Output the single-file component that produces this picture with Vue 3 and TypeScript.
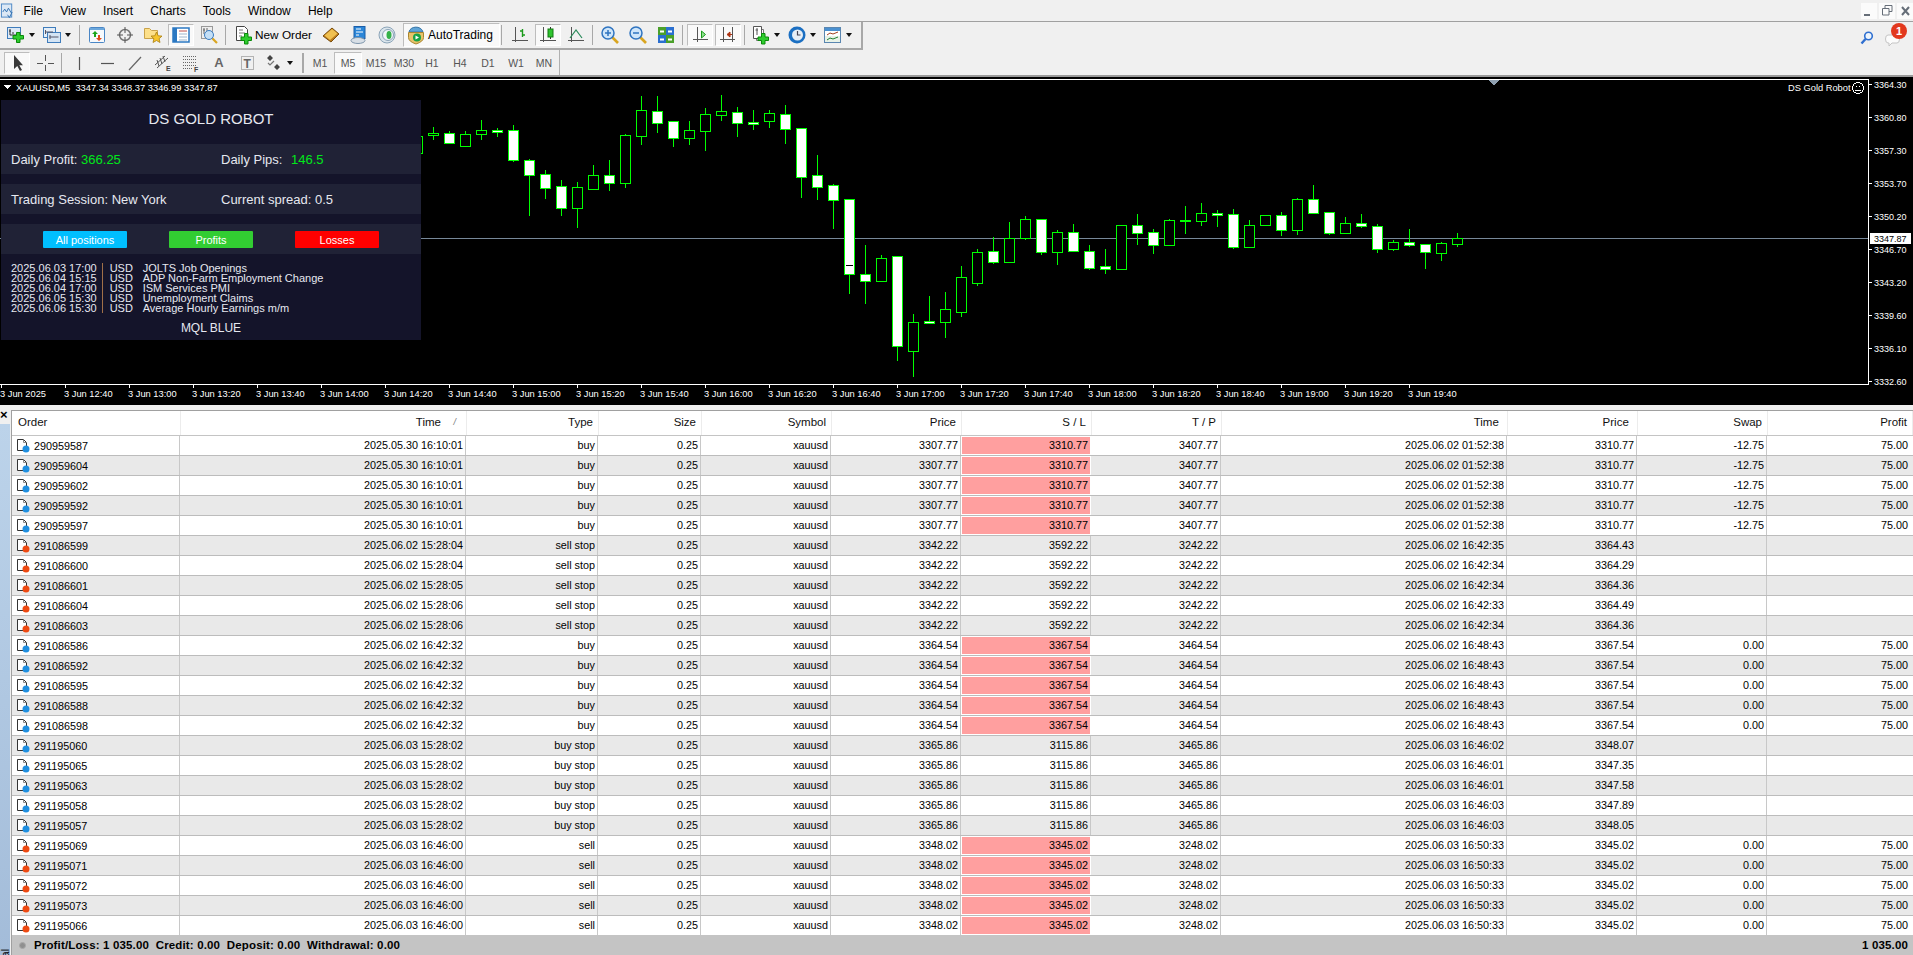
<template>
  <div class="app">
    <div class="menu">
      <svg class="app-icon" width="16" height="18" viewBox="0 0 16 18">
        <rect x="1.5" y="1.5" width="11" height="14" fill="#dce8f5" stroke="#4a86c5" />
        <path d="M3 10l2-3 2 3 2-4 3 5M8 13l2 3 3-6" fill="none" stroke="#2f6fb0" />
      </svg>
      <span v-for="m in menus" :key="m" class="menu-item">{{ m }}</span>
      <div class="win-btns">
        <span class="win-btn"><svg width="16" height="16" viewBox="0 0 16 16"><path d="M3 11h6v2H3z" fill="#666e78" /></svg></span>
        <span class="win-btn"><svg width="16" height="16" viewBox="0 0 16 16"><path d="M6 5V2.500h7v6h-3M3.500 5.500h6.500v6.500H3.500z" fill="none" stroke="#666e78" /></svg></span>
        <span class="win-btn"><svg width="16" height="16" viewBox="0 0 16 16"><path d="M5 4l7 8M12 4l-7 8" fill="none" stroke="#666e78" stroke-width="2" /></svg></span>
      </div>
    </div>

    <div class="bars">
      <div class="tb tb1">
        <div class="tool drop">
          <svg width="18" height="18" viewBox="0 0 18 18">
            <rect x="0.500" y="1.500" width="13" height="11" fill="#dce8f5" stroke="#3f7cbb" />
            <path d="M3 3v6h6M2 5h2M5 7h2" fill="none" stroke="#333" />
            <path d="M9.500 6.500h3.500v3h3.500v3.500H13v3.500H9.500V13H6v-3.500h3.500z" fill="#2ecc2e" stroke="#0a8a0a" />
          </svg>
          <i class="caret"></i>
        </div>
        <div class="tool drop wide">
          <svg width="18" height="18" viewBox="0 0 18 18">
            <rect x="0.500" y="1.500" width="12" height="10" fill="#e4eef8" stroke="#3f7cbb" />
            <rect x="4.500" y="6.500" width="13" height="10" fill="#d4e4f4" stroke="#3f7cbb" />
            <path d="M2.500 4v4M2 6h8M7 9v4M6.500 11h9" fill="none" stroke="#556" />
          </svg>
          <i class="caret"></i>
        </div>
        <span class="sep"></span>
        <div class="tool">
          <svg width="18" height="18" viewBox="0 0 18 18">
            <rect x="1.500" y="1.500" width="15" height="15" rx="1" fill="#f6f9fc" stroke="#4a86c5" />
            <rect x="2" y="2" width="14" height="2" fill="#6ba7dc" />
            <path d="M7 5l3 3H8v3H6V8H4z" fill="#1aa51a" />
            <path d="M11 15l-3-3h2V9h2v3h2z" fill="#e04a1a" />
          </svg>
        </div>
        <div class="tool">
          <svg width="18" height="18" viewBox="0 0 18 18">
            <circle cx="9" cy="9" r="5.500" fill="none" stroke="#777" stroke-width="1.500" />
            <path d="M9 1v6M9 11v6M1 9h6M11 9h6" fill="none" stroke="#555" />
          </svg>
        </div>
        <div class="tool">
          <svg width="18" height="18" viewBox="0 0 18 18">
            <path d="M0.500 2.500h5l2 2h6v8H.500z" fill="#fde08a" stroke="#c9a24a" />
            <path d="M12.500 6l1.700 3.800 3.800.3-2.900 2.600.9 3.800-3.500-2-3.500 2 .9-3.800L7 10.100l3.800-.3z" fill="#f7c52d" stroke="#a97f10" stroke-width=".8" />
          </svg>
        </div>
        <div class="tool on">
          <svg width="18" height="18" viewBox="0 0 18 18">
            <rect x="1" y="2" width="16" height="14" fill="#fff" stroke="#2b78c2" stroke-width="1.500" />
            <rect x="1" y="2" width="4" height="14" fill="#2b78c2" />
            <path d="M7 5h8" stroke="#c0504d" />
            <path d="M7 8h8M7 11h8M7 14h8" stroke="#9fb6cc" />
          </svg>
        </div>
        <div class="tool">
          <svg width="18" height="18" viewBox="0 0 18 18">
            <rect x="1.500" y="0.500" width="11" height="12" fill="#eee" stroke="#999" />
            <path d="M4 2v6M3 4h2M7 2v4" stroke="#666" fill="none" />
            <circle cx="9" cy="9" r="4.500" fill="#c4dff6" stroke="#3a7cc0" />
            <path d="M12.500 12.500l4.500 4.500" stroke="#d9a520" stroke-width="2.200" />
          </svg>
        </div>
        <span class="sep"></span>
        <div class="tool order-btn">
          <svg width="18" height="20" viewBox="0 0 18 20">
            <path d="M1.500 1.500h8l3 3v11h-11z" fill="#fff" stroke="#444" />
            <path d="M4 5h4M4 8h6M4 11h3" stroke="#777" />
            <path d="M9.500 8.500h3.500v3.500h3.500v3.500H13v3.500H9.500v-3.500H6V12h3.500z" fill="#2ecc2e" stroke="#0a8a0a" />
          </svg>
          <span>New Order</span>
        </div>
        <div class="tool">
          <svg width="18" height="18" viewBox="0 0 18 18">
            <path d="M1 10l9-8 7 6-8 8z" fill="#b97a1c" stroke="#7b4e0c" />
            <path d="M2.500 9.500l7.500-6.500 5.500 4.500-7.500 6.500z" fill="#f0c050" />
          </svg>
        </div>
        <div class="tool">
          <svg width="18" height="18" viewBox="0 0 18 18">
            <rect x="4" y="0.500" width="11" height="12" fill="#2b86d8" stroke="#1b5ea8" />
            <path d="M6 3h5M6 6h7M6 9h3" stroke="#fff" />
            <ellipse cx="8" cy="14.500" rx="7" ry="3" fill="#d8dfe6" stroke="#7f96ac" />
          </svg>
        </div>
        <div class="tool">
          <svg width="18" height="18" viewBox="0 0 18 18">
            <circle cx="9" cy="9" r="8" fill="#dbe5ec" stroke="#8ba4b8" />
            <circle cx="10" cy="9" r="5.500" fill="#f2f6f9" stroke="#8ba4b8" />
            <ellipse cx="11" cy="9" rx="2.500" ry="4" fill="#35b24a" />
          </svg>
        </div>
        <div class="auto on">
          <svg width="18" height="20" viewBox="0 0 18 20">
            <path d="M2 7C3 1 14 0 16 7z" fill="#5fa4d6" stroke="#3a77a8" />
            <path d="M1.500 7.500h15v5q0 4-7.500 6.500-7.500-2.500-7.500-6.500z" fill="#e8c36a" stroke="#a88530" />
            <circle cx="10" cy="12.500" r="4" fill="#17a345" />
            <path d="M8.500 10.500l3.500 2-3.500 2z" fill="#fff" />
          </svg>
          <span>AutoTrading</span>
        </div>
        <span class="sep sep-wide"></span>
        <div class="tool">
          <svg width="18" height="18" viewBox="0 0 18 18">
            <path d="M4.500 1v15M1 14.500h16" fill="none" stroke="#555" />
            <path d="M11.500 3v8M9 5h2.500M11.500 9H14" fill="none" stroke="#1a9a1a" stroke-width="1.400" />
          </svg>
        </div>
        <div class="tool on">
          <svg width="18" height="18" viewBox="0 0 18 18">
            <path d="M4.500 1v15M1 14.500h16" fill="none" stroke="#555" />
            <path d="M11.500 1v12" stroke="#333" />
            <rect x="9" y="3" width="5" height="8" fill="#2fc42f" stroke="#127a12" />
          </svg>
        </div>
        <div class="tool">
          <svg width="18" height="18" viewBox="0 0 18 18">
            <path d="M4.500 1v15M1 14.500h16" fill="none" stroke="#555" />
            <path d="M3 12L9 4l6 8" fill="none" stroke="#2a8a5a" stroke-width="1.200" />
          </svg>
        </div>
        <span class="sep"></span>
        <div class="tool">
          <svg width="18" height="18" viewBox="0 0 18 18">
            <path d="M11 11l6 6" stroke="#d9a520" stroke-width="2.600" />
            <circle cx="7" cy="7" r="6" fill="#cfe6fa" stroke="#2f74c0" stroke-width="1.500" />
            <path d="M4 7h6M7 4v6" stroke="#2f74c0" stroke-width="1.500" />
          </svg>
        </div>
        <div class="tool">
          <svg width="18" height="18" viewBox="0 0 18 18">
            <path d="M11 11l6 6" stroke="#d9a520" stroke-width="2.600" />
            <circle cx="7" cy="7" r="6" fill="#cfe6fa" stroke="#2f74c0" stroke-width="1.500" />
            <path d="M4 7h6" stroke="#2f74c0" stroke-width="1.500" />
          </svg>
        </div>
        <div class="tool">
          <svg width="18" height="18" viewBox="0 0 18 18">
            <rect x="1" y="1" width="8" height="8" fill="#4aa02a" />
            <rect x="9" y="1" width="8" height="8" fill="#2a6fd0" />
            <rect x="1" y="9" width="8" height="8" fill="#2a6fd0" />
            <rect x="9" y="9" width="8" height="8" fill="#4aa02a" />
            <path d="M3 5.500h4M11 5.500h4M3 13.500h4M11 13.500h4" stroke="#fff" stroke-width="2" />
          </svg>
        </div>
        <span class="sep"></span>
        <div class="tool on">
          <svg width="18" height="18" viewBox="0 0 18 18">
            <path d="M6.500 1v15M2 13.500h15" fill="none" stroke="#555" />
            <path d="M10.500 5l4 3.500-4 3.500z" fill="#8fe08f" stroke="#1a9a1a" />
          </svg>
        </div>
        <div class="tool on">
          <svg width="18" height="18" viewBox="0 0 18 18">
            <path d="M4.500 1v15M1 13.500h15M13.500 1v15" fill="none" stroke="#555" />
            <path d="M13 8.500H9M11 6l-3 2.500 3 2.500z" fill="#c8401a" stroke="#a83010" />
          </svg>
        </div>
        <span class="sep"></span>
        <div class="tool drop">
          <svg width="18" height="20" viewBox="0 0 18 20">
            <path d="M4.500 4.500h7v11h-7z" fill="#fff" stroke="#777" />
            <path d="M1.500 1.500h8v12h-8z" fill="#fff" stroke="#555" />
            <path d="M5 3v7M3.500 5H6" stroke="#555" fill="none" />
            <path d="M9.500 8.500h3.500v3.500h3.500v3.500H13v3.500H9.500v-3.500H6V12h3.500z" fill="#2ecc2e" stroke="#0a8a0a" />
          </svg>
          <i class="caret"></i>
        </div>
        <div class="tool drop">
          <svg width="18" height="18" viewBox="0 0 18 18">
            <circle cx="9" cy="9" r="8.500" fill="#1b6fc2" />
            <circle cx="9.500" cy="9" r="5.500" fill="#e6eef6" />
            <path d="M9.500 5v4h3" fill="none" stroke="#445" stroke-width="1.200" />
          </svg>
          <i class="caret"></i>
        </div>
        <div class="tool drop">
          <svg width="18" height="18" viewBox="0 0 18 18">
            <rect x="0.500" y="1.500" width="16" height="15" fill="#fff" stroke="#5a86b0" />
            <rect x="1" y="2" width="15" height="3" fill="#4a90d0" />
            <rect x="1" y="10" width="15" height="6" fill="#e8f2e8" />
            <path d="M3 9l3-2 3 1 5-2" fill="none" stroke="#a04020" />
            <path d="M3 14l3-2 3 1 5-2" fill="none" stroke="#208030" />
          </svg>
          <i class="caret"></i>
        </div>
      </div>
      <div class="tb1-right">
        <svg width="14" height="14" viewBox="0 0 14 14">
          <circle cx="8.500" cy="5" r="3.800" fill="#eef5fc" stroke="#2f6fd0" stroke-width="1.600" />
          <path d="M5.500 8L1.500 12.500" stroke="#2f6fd0" stroke-width="2.400" />
        </svg>
        <div class="chat">
          <svg width="15" height="13" viewBox="0 0 15 13">
            <path d="M3 1h9q2.500 0 2.500 4t-2.500 4H7l-3 3V9H3Q.500 9 .500 5T3 1z" fill="#fbfbfb" stroke="#c4c4c4" />
          </svg>
          <span class="badge">1</span>
        </div>
      </div>
      <div class="tb tb2">
        <div class="tool on">
          <svg width="18" height="18" viewBox="0 0 18 18"><path d="M6 1v14l3.300-3 2.700 5 2-1-2.700-4.800H15z" fill="#3a3a3a" /></svg>
        </div>
        <div class="tool">
          <svg width="18" height="18" viewBox="0 0 18 18"><path d="M9.500 1v6M9.500 11v6M1 9.500h6M12 9.500h6" fill="none" stroke="#555" /></svg>
        </div>
        <span class="sep"></span>
        <div class="tool">
          <svg width="18" height="18" viewBox="0 0 18 18"><path d="M9.500 3v13" stroke="#555" stroke-width="1.200" /></svg>
        </div>
        <div class="tool">
          <svg width="18" height="18" viewBox="0 0 18 18"><path d="M3 9.500h13" stroke="#555" stroke-width="1.200" /></svg>
        </div>
        <div class="tool">
          <svg width="18" height="18" viewBox="0 0 18 18"><path d="M3 16L15 3" stroke="#666" stroke-width="1.200" /></svg>
        </div>
        <div class="tool">
          <svg width="18" height="18" viewBox="0 0 18 18">
            <path d="M1 11L11 2M3 14L14 4M3 6l2 6M6 4l2 6M9 2l2 6" fill="none" stroke="#555" />
            <text x="12" y="17" class="mini">E</text>
          </svg>
        </div>
        <div class="tool">
          <svg width="18" height="18" viewBox="0 0 18 18">
            <path d="M1 2.500h14M1 5.500h14M1 8.500h14M1 11.500h14M1 14.500h10" stroke="#666" stroke-dasharray="1 1" />
            <text x="12" y="17.500" class="mini">F</text>
          </svg>
        </div>
        <div class="tool"><span class="glyph-a">A</span></div>
        <div class="tool">
          <svg width="18" height="18" viewBox="0 0 18 18">
            <rect x="3.500" y="2.500" width="12" height="13" fill="none" stroke="#777" stroke-dasharray="1 1" />
            <text x="5.500" y="14" class="mini-t">T</text>
          </svg>
        </div>
        <div class="tool drop">
          <svg width="18" height="18" viewBox="0 0 18 18">
            <path d="M5 1l3 3-3 3-3-3zM12 10l3 3-3 3-3-3z" fill="#444" />
            <path d="M3 9l2 2 4-4" fill="none" stroke="#777" stroke-width="1.200" />
          </svg>
          <i class="caret"></i>
        </div>
        <span class="sep sep-tf"></span>
        <span v-for="tf in timeframes" :key="tf" class="tf" :class="{ on: tf === 'M5' }">{{ tf }}</span>
      </div>
    </div>

    <div class="chart">
      <svg class="plot" width="1913" height="328" viewBox="0 77 1913 328">
        <path d="M0 79.500H1868.500V384.500H0" fill="none" stroke="#fff" />
        <path d="M0 238.500H1868" stroke="#778899" />
        <path d="M1488 80h12l-6 5z" fill="#8fa0b0" />
        <g v-for="c in candles" :key="c.x">
          <path :d="`M${c.x + 0.5} ${c.high}V${c.low}`" stroke="#00ff00" />
          <rect :x="c.x - 4.5" :y="c.top + 0.5" width="10" :height="Math.max(c.bottom - c.top, 1)" :fill="c.bear ? '#fff' : '#000'" stroke="#00ff00" />
        </g>
        <path d="M846 265.500h7" stroke="#000" />
        <path v-for="p in priceTicks" :key="p.label" :d="`M1869 ${p.y + 0.5}h3`" stroke="#fff" />
        <text v-for="p in priceTicks" :key="'t' + p.label" x="1874" :y="p.y + 4" class="axis">{{ p.label }}</text>
        <rect x="1870" y="233" width="41" height="11" fill="#fff" />
        <text x="1874" y="242" class="axis last">3347.87</text>
        <path v-for="t in timeTicks" :key="t.label" :d="`M${t.x + 0.5} 385v3`" stroke="#fff" />
        <text v-for="t in timeTicks" :key="'l' + t.label" :x="t.x - 1" y="397" class="axis time">{{ t.label }}</text>
        <path d="M4 85h7l-3.500 4z" fill="#fff" />
        <text x="16" y="91" class="axis legend">XAUUSD,M5&nbsp; 3347.34 3348.37 3346.99 3347.87</text>
        <text x="1788" y="91" class="axis legend">DS Gold Robot</text>
        <circle cx="1858" cy="88" r="5.500" fill="none" stroke="#fff" />
        <path d="M1855.500 90q2.500 2 5 0M1856 86h1M1859 86h1" fill="none" stroke="#fff" />
      </svg>

      <div class="panel">
        <div class="panel-title">DS GOLD ROBOT</div>
        <div class="strip">
          <span class="col">Daily Profit: <b class="up">366.25</b></span>
          <span class="col">Daily Pips: <b class="up pips">146.5</b></span>
        </div>
        <div class="strip">
          <span class="col">Trading Session: New York</span>
          <span class="col">Current spread: 0.5</span>
        </div>
        <div class="strip buttons">
          <span class="pbtn all">All positions</span>
          <span class="pbtn win">Profits</span>
          <span class="pbtn loss">Losses</span>
        </div>
        <div class="news">
          <div class="news-col">
            <div v-for="n in news" :key="n.time">{{ n.time }}</div>
          </div>
          <div class="news-col cur">
            <div v-for="n in news" :key="n.time">USD</div>
          </div>
          <div class="news-col">
            <div v-for="n in news" :key="n.time">{{ n.title }}</div>
          </div>
        </div>
        <div class="panel-foot">MQL BLUE</div>
      </div>
    </div>

    <div class="terminal">
      <div class="side">
        <span class="close">×</span>
        <div class="side-tab"><span>Terminal</span></div>
      </div>
      <div class="grid">
        <div class="head">
          <div v-for="h in heads" :key="h" class="hcell" :class="{ first: h === 'Order' }">
            {{ h }}<i v-if="h === 'Time'" class="sort">/</i>
          </div>
        </div>
        <div v-for="(d, i) in deals" :key="d.order + d.time" class="row" :class="{ alt: i % 2 === 1 }">
          <div class="cell first">
            <svg width="14" height="15" viewBox="0 0 14 15">
              <path d="M1.500 1.500h6l3 3v8h-9z" fill="#fff" stroke="#333" />
              <path d="M7.500 1.500v3h3" fill="none" stroke="#888" />
              <circle cx="10" cy="11" r="3.500" :fill="d.type.startsWith('buy') ? '#1f8fe0' : '#ee4a12'" />
            </svg>
            {{ d.order }}
          </div>
          <div class="cell">{{ d.time }}</div>
          <div class="cell">{{ d.type }}</div>
          <div class="cell">0.25</div>
          <div class="cell">xauusd</div>
          <div class="cell">{{ d.price }}</div>
          <div class="cell" :class="{ hit: d.hit }">{{ d.sl }}</div>
          <div class="cell">{{ d.tp }}</div>
          <div class="cell">{{ d.closeTime }}</div>
          <div class="cell">{{ d.closePrice }}</div>
          <div class="cell">{{ d.swap }}</div>
          <div class="cell">{{ d.profit }}</div>
        </div>
        <div class="status">
          <i class="dot"></i>
          <span>Profit/Loss: 1 035.00&nbsp; Credit: 0.00&nbsp; Deposit: 0.00&nbsp; Withdrawal: 0.00</span>
          <span class="total">1 035.00</span>
        </div>
      </div>
    </div>
  </div>
</template>

<script setup lang="ts">
interface Deal {
  order: string
  time: string
  type: string
  price: string
  sl: string
  tp: string
  closeTime: string
  closePrice: string
  swap: string
  profit: string
  hit: boolean
}

const menus = ['File', 'View', 'Insert', 'Charts', 'Tools', 'Window', 'Help']
const timeframes = ['M1', 'M5', 'M15', 'M30', 'H1', 'H4', 'D1', 'W1', 'MN']
const heads = ['Order', 'Time', 'Type', 'Size', 'Symbol', 'Price', 'S / L', 'T / P', 'Time ', 'Price ', 'Swap', 'Profit']

const news = [
  { time: '2025.06.03 17:00', title: 'JOLTS Job Openings' },
  { time: '2025.06.04 15:15', title: 'ADP Non-Farm Employment Change' },
  { time: '2025.06.04 17:00', title: 'ISM Services PMI' },
  { time: '2025.06.05 15:30', title: 'Unemployment Claims' },
  { time: '2025.06.06 15:30', title: 'Average Hourly Earnings m/m' }
]

// [high, body top, body bottom, low, bear] in 1/3 px, measured from y = 80
const candlesA: [number, number, number, number, number][] = [
  [140, 160, 166, 180, 0], [153, 160, 190, 190, 1], [153, 163, 197, 197, 0], [120, 151, 163, 180, 0],
  [144, 151, 155, 170, 1], [135, 151, 241, 246, 1], [236, 241, 284, 408, 1], [270, 283, 323, 357, 1],
  [300, 319, 383, 408, 1], [306, 322, 383, 444, 0], [255, 286, 326, 326, 0], [240, 286, 308, 333, 1],
  [162, 166, 308, 324, 0], [48, 91, 167, 195, 0], [48, 94, 128, 159, 1], [124, 124, 173, 201, 1],
  [123, 151, 173, 195, 0], [84, 103, 152, 213, 0], [45, 94, 104, 123, 0], [82, 97, 130, 171, 1],
  [90, 127, 131, 150, 1], [90, 100, 122, 144, 0], [75, 103, 146, 192, 1], [145, 145, 290, 354, 1],
  [225, 286, 320, 360, 1], [312, 316, 359, 447, 1], [358, 358, 581, 642, 1], [495, 583, 602, 672, 1],
  [525, 535, 602, 602, 0], [529, 529, 797, 843, 1]
]
// same, measured from y = 150
const candlesB: [number, number, number, number, number][] = [
  [492, 517, 602, 681, 0], [438, 514, 518, 518, 1], [427, 478, 515, 564, 0], [348, 382, 485, 500, 0],
  [297, 307, 398, 407, 0], [262, 304, 335, 342, 1], [216, 265, 335, 335, 0], [198, 208, 265, 269, 0],
  [208, 208, 307, 315, 1], [240, 247, 307, 345, 0], [222, 247, 302, 306, 1], [285, 304, 353, 360, 1],
  [297, 349, 356, 372, 1], [226, 226, 356, 361, 0], [192, 226, 250, 285, 1], [238, 247, 284, 312, 1],
  [207, 211, 284, 284, 0], [168, 210, 212, 252, 0], [159, 190, 212, 228, 0], [180, 190, 194, 231, 1],
  [177, 193, 290, 297, 1], [210, 226, 290, 290, 0], [196, 196, 226, 226, 0], [186, 196, 239, 258, 1],
  [144, 148, 239, 255, 0], [105, 148, 188, 188, 1], [187, 187, 248, 255, 1], [201, 220, 248, 252, 0],
  [192, 220, 227, 234, 1], [222, 229, 296, 309, 1], [270, 277, 296, 303, 0], [237, 277, 284, 291, 1],
  [283, 283, 305, 357, 1], [276, 280, 308, 333, 0], [249, 265, 281, 291, 0]
]

const toCandle = (origin: number) => (v: [number, number, number, number, number]) => ({
  high: Math.round(origin + v[0] / 3),
  top: Math.round(origin + v[1] / 3),
  bottom: Math.round(origin + v[2] / 3),
  low: Math.round(origin + v[3] / 3),
  bear: v[4] === 1
})

const candles = [
  { x: 417, high: 128, top: 136, bottom: 153, low: 160, bear: false },
  ...[...candlesA.map(toCandle(80)), ...candlesB.map(toCandle(150))].map((c, i) => ({ ...c, x: 433 + 16 * i }))
]

const prices = ['3364.30', '3360.80', '3357.30', '3353.70', '3350.20', '3346.70', '3343.20', '3339.60', '3336.10', '3332.60']
const priceTicks = prices.map((label, i) => ({ label, y: 84 + 33 * i }))

const pad = (n: number) => String(n).padStart(2, '0')
const timeTicks = [
  { label: '3 Jun 2025', x: 1 },
  ...Array.from({ length: 22 }, (_, i) => {
    const mins = 12 * 60 + 40 + 20 * i
    return { label: `3 Jun ${pad(Math.floor(mins / 60))}:${pad(mins % 60)}`, x: 65 + 64 * i }
  })
]

const batch = (
  orders: string[],
  rest: Omit<Deal, 'order' | 'closeTime' | 'closePrice' | 'time'> & { time: string | string[]; closes: [string, string][] }
): Deal[] =>
  orders.map((order, i) => ({
    order,
    time: Array.isArray(rest.time) ? rest.time[i] : rest.time,
    type: rest.type,
    price: rest.price,
    sl: rest.sl,
    tp: rest.tp,
    closeTime: rest.closes[rest.closes.length > 1 ? i : 0][0],
    closePrice: rest.closes[rest.closes.length > 1 ? i : 0][1],
    swap: rest.swap,
    profit: rest.profit,
    hit: rest.hit
  }))

const deals: Deal[] = [
  ...batch(['290959587', '290959604', '290959602', '290959592', '290959597'], {
    time: '2025.05.30 16:10:01', type: 'buy', price: '3307.77', sl: '3310.77', tp: '3407.77',
    closes: [['2025.06.02 01:52:38', '3310.77']], swap: '-12.75', profit: '75.00', hit: true
  }),
  ...batch(['291086599', '291086600', '291086601', '291086604', '291086603'], {
    time: ['2025.06.02 15:28:04', '2025.06.02 15:28:04', '2025.06.02 15:28:05', '2025.06.02 15:28:06', '2025.06.02 15:28:06'],
    type: 'sell stop', price: '3342.22', sl: '3592.22', tp: '3242.22',
    closes: [
      ['2025.06.02 16:42:35', '3364.43'], ['2025.06.02 16:42:34', '3364.29'], ['2025.06.02 16:42:34', '3364.36'],
      ['2025.06.02 16:42:33', '3364.49'], ['2025.06.02 16:42:34', '3364.36']
    ],
    swap: '', profit: '', hit: false
  }),
  ...batch(['291086586', '291086592', '291086595', '291086588', '291086598'], {
    time: '2025.06.02 16:42:32', type: 'buy', price: '3364.54', sl: '3367.54', tp: '3464.54',
    closes: [['2025.06.02 16:48:43', '3367.54']], swap: '0.00', profit: '75.00', hit: true
  }),
  ...batch(['291195060', '291195065', '291195063', '291195058', '291195057'], {
    time: '2025.06.03 15:28:02', type: 'buy stop', price: '3365.86', sl: '3115.86', tp: '3465.86',
    closes: [
      ['2025.06.03 16:46:02', '3348.07'], ['2025.06.03 16:46:01', '3347.35'], ['2025.06.03 16:46:01', '3347.58'],
      ['2025.06.03 16:46:03', '3347.89'], ['2025.06.03 16:46:03', '3348.05']
    ],
    swap: '', profit: '', hit: false
  }),
  ...batch(['291195069', '291195071', '291195072', '291195073', '291195066'], {
    time: '2025.06.03 16:46:00', type: 'sell', price: '3348.02', sl: '3345.02', tp: '3248.02',
    closes: [['2025.06.03 16:50:33', '3345.02']], swap: '0.00', profit: '75.00', hit: true
  })
]
</script>

<style scoped>
.app {
  width: 1913px;
  height: 955px;
  overflow: hidden;
  background: #f0f0f0;
  font-family: "Liberation Sans", Arial, sans-serif;
  color: #000;
}

.menu {
  display: flex;
  align-items: center;
  height: 21px;
  border-bottom: 1px solid #a0a0a0;
  font-size: 12px;
}
.app-icon {
  flex: none;
  width: 15px;
}
.menu-item {
  padding: 0 8.6px;
}
.win-btns {
  margin-left: auto;
  display: flex;
  gap: 2px;
}
.win-btn {
  display: flex;
  align-items: center;
  justify-content: center;
  width: 16px;
  height: 16px;
  background: #fbfbfb;
}

.bars {
  position: relative;
  height: 55px;
  border-bottom: 2px solid #9a9a9a;
  box-sizing: border-box;
}
.tb {
  display: flex;
  align-items: center;
  box-sizing: border-box;
  padding-left: 4px;
}
.tb1 {
  width: 863px;
  height: 28px;
  border-right: 2px solid #a8a8a8;
  border-bottom: 2px solid #a8a8a8;
}
.tb2 {
  width: 560px;
  height: 25px;
  border-right: 1px solid #b0b0b0;
}
.tb1-right {
  position: absolute;
  top: 6px;
  right: 13px;
  display: flex;
  align-items: center;
  gap: 11px;
}
.chat {
  position: relative;
  width: 15px;
  height: 14px;
  margin-top: 5px;
}
.badge {
  position: absolute;
  top: -10px;
  left: 6px;
  width: 16px;
  height: 16px;
  border-radius: 50%;
  background: #e2381e;
  color: #fff;
  font-size: 11px;
  font-weight: bold;
  line-height: 16px;
  text-align: center;
}

.tool {
  display: flex;
  align-items: center;
  justify-content: center;
  flex: none;
  box-sizing: border-box;
  width: 26px;
  height: 22px;
  margin-right: 2px;
  border: 1px solid transparent;
}
.tool.on,
.auto.on,
.tf.on {
  border-color: #bdbdbd #fff #fff #bdbdbd;
  background: #f9f9f9;
}
.tool.drop {
  justify-content: flex-start;
  width: 34px;
  padding-left: 2px;
}
.tool.drop.wide {
  width: 36px;
}
.caret {
  width: 0;
  height: 0;
  margin-left: 4px;
  border: 3px solid transparent;
  border-top: 4px solid #111;
  border-bottom: 0;
}
.sep {
  flex: none;
  width: 1px;
  height: 20px;
  margin: 0 4px 0 1px;
  background: #a8a8a8;
}
.sep-wide {
  margin-right: 5px;
}
.sep-tf {
  width: 2px;
  margin: 0 2px 0 4px;
}
.order-btn {
  justify-content: flex-start;
  width: 86px;
  padding-left: 4px;
  font-size: 11.8px;
  white-space: nowrap;
}
.order-btn span {
  margin-left: 2px;
}
.auto {
  display: flex;
  align-items: center;
  flex: none;
  box-sizing: border-box;
  width: 97px;
  height: 24px;
  margin: 0 0 0 1px;
  padding-left: 3px;
  border: 1px solid transparent;
  font-size: 12px;
  white-space: nowrap;
}
.auto span {
  margin-left: 3px;
}
.mini {
  font: bold 7px "Liberation Sans", sans-serif;
  fill: #444;
}
.mini-t {
  font: bold 12px "Liberation Sans", sans-serif;
  fill: #666;
}
.glyph-a {
  font-size: 13px;
  font-weight: bold;
  color: #666;
}
.tf {
  box-sizing: border-box;
  flex: none;
  width: 28px;
  height: 22px;
  line-height: 21px;
  text-align: center;
  font-size: 10.5px;
  color: #555;
  border: 1px solid transparent;
}

.chart {
  position: relative;
  height: 328px;
  background: #000;
}
.plot {
  display: block;
  shape-rendering: crispEdges;
}
.axis {
  font-size: 9px;
  fill: #fff;
  shape-rendering: auto;
}
.axis.time {
  font-size: 9.3px;
}
.axis.last {
  fill: #000;
}
.legend {
  font-size: 9.3px;
}

.panel {
  position: absolute;
  top: 23px;
  left: 1px;
  width: 420px;
  height: 240px;
  display: flex;
  flex-direction: column;
  background: #14142a;
  color: #e6e8f0;
}
.panel-title {
  height: 44px;
  line-height: 38px;
  text-align: center;
  font-size: 15px;
}
.strip {
  display: flex;
  align-items: center;
  flex: none;
  height: 30px;
  margin-bottom: 10px;
  background: #202236;
  font-size: 13px;
}
.col {
  width: 210px;
  padding-left: 10px;
  box-sizing: border-box;
}
.up {
  font-weight: normal;
  color: #00e81a;
}
.pips {
  margin-left: 5px;
}
.buttons {
  margin-bottom: 0;
}
.pbtn {
  display: block;
  flex: none;
  width: 84px;
  height: 17px;
  margin-left: 42px;
  border-radius: 1px;
  color: #fff;
  font-size: 11px;
  line-height: 18px;
  text-align: center;
}
.all { background: #00bfff; }
.win { background: #32cd32; }
.loss { background: #ff0000; }
.news {
  display: flex;
  margin: 9px 0 0 10px;
  font-size: 11px;
  line-height: 10px;
}
.news-col {
  padding-right: 5px;
}
.cur {
  width: 26px;
  padding: 0 7px;
  border-left: 1px solid #a07048;
}
.panel-foot {
  margin-top: 8px;
  text-align: center;
  font-size: 12px;
}

.terminal {
  display: flex;
  height: 550px;
  box-sizing: border-box;
  padding-top: 5px;
}
.side {
  flex: none;
  position: relative;
  width: 11px;
}
.close {
  display: block;
  height: 14px;
  font-size: 13px;
  line-height: 10px;
  font-weight: bold;
}
.side-tab {
  position: absolute;
  top: 14px;
  bottom: 0;
  left: 0;
  width: 10px;
  overflow: hidden;
  background: linear-gradient(#bcd3ea, #a3bcd9);
}
.side-tab span {
  position: absolute;
  bottom: -34px;
  left: -1px;
  writing-mode: vertical-rl;
  transform: rotate(180deg);
  font-size: 10.5px;
}
.grid {
  flex: 1;
  border-top: 1px solid #a0a0a0;
  border-left: 1px solid #a0a0a0;
  font-size: 10.8px;
}
.head,
.row {
  display: grid;
  grid-template-columns: 168px 286px 132px 103px 130px 130px 130px 130px 286px 130px 130px 146px;
  box-sizing: border-box;
}
.head {
  grid-template-columns: 169px 286px 132px 103px 130px 130px 130px 130px 286px 130px 130px 145px;
  height: 25px;
  background: #fff;
  border-bottom: 1px solid #c4c4c4;
  font-size: 11.5px;
}
.hcell {
  position: relative;
  padding-right: 5px;
  line-height: 23px;
  text-align: right;
  white-space: pre;
  border-right: 1px solid #ececec;
  color: #111;
}
.hcell:nth-child(2) {
  padding-right: 25px;
}
.hcell.first {
  text-align: left;
  padding-left: 6px;
}
.sort {
  position: absolute;
  right: 10px;
  top: 0;
  font-size: 9px;
  color: #777;
}
.row {
  height: 20px;
  background: #fff;
  border-bottom: 1px solid #bcbcbc;
}
.row.alt {
  background: #e9e9e9;
}
.cell {
  box-sizing: border-box;
  height: 19px;
  padding-right: 2px;
  line-height: 18px;
  text-align: right;
  border-right: 1px solid #c8c8c8;
  white-space: nowrap;
}
.cell:last-child {
  padding-right: 5px;
  border-right: 0;
}
.cell.first {
  display: flex;
  align-items: center;
  gap: 4px;
  padding-left: 4px;
  text-align: left;
}
.hit {
  background: #ff9f9f;
  border: 1px solid #fff;
  line-height: 16px;
}
.status {
  display: flex;
  align-items: center;
  height: 20px;
  margin-top: -1px;
  position: relative;
  background: #c4c4c4;
  font-size: 11.5px;
  font-weight: bold;
  letter-spacing: 0.15px;
}
.dot {
  width: 7px;
  height: 7px;
  margin: 0 8px 0 7px;
  border-radius: 50%;
  background: #8f8f8f;
  border: 1px solid #a8a8a8;
  box-sizing: border-box;
}
.total {
  margin-left: auto;
  padding-right: 5px;
}
</style>
